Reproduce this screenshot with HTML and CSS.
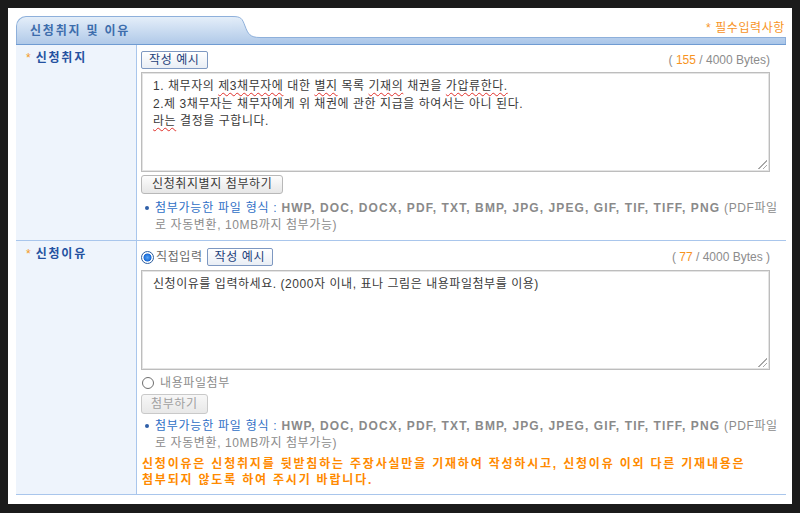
FILE: index.html
```html
<!DOCTYPE html>
<html lang="ko">
<head>
<meta charset="utf-8">
<title>신청취지 및 이유</title>
<link rel="stylesheet" href="styles.css">
</head>
<body>
<div class="frame">
  <div class="sec-head">
    <div class="tab"><span class="tab-title">신청취지 및 이유</span></div>
    <svg class="tab-curve" width="28" height="28" viewBox="0 0 28 28">
      <defs>
        <linearGradient id="hg" x1="0" y1="0" x2="0" y2="1">
          <stop offset="0" stop-color="#e4eef9"/>
          <stop offset="1" stop-color="#b0c9e8"/>
        </linearGradient>
      </defs>
      <path d="M0 0.5 C9 0.5 10 2 13 10 C16 18 18 21.5 28 21.5 L28 28 L0 28 Z" fill="url(#hg)"/>
      <path d="M0 0.5 C9 0.5 10 2 13 10 C16 18 18 21.5 28 21.5" fill="none" stroke="#8eb0db" stroke-width="1"/>
    </svg>
    <div class="head-right">
      <div class="req">* 필수입력사항</div>
      <div class="bar"></div>
    </div>
  </div>

  <div class="row row-purpose">
    <div class="label"><span class="star">*</span>신청취지</div>
    <div class="field">
      <div class="field-top">
        <button class="btn-example" type="button">작성 예시</button>
        <span class="bytes">( <em>155</em> / 4000 Bytes)</span>
      </div>
      <div class="textbox">1. 채무자의 <span class="typo">제3채무자에</span> 대한 <span class="typo">별지</span> 목록 <span class="typo">기재의</span> 채권을 <span class="typo">가압류한다.</span><br>2.제 3채무자는 채무자에게 위 채권에 관한 지급을 하여서는 아니 된다.<br><span class="typo">라는</span> 결정을 구합니다.</div>
      <button class="btn-attach" type="button">신청취지별지 첨부하기</button>
      <div class="note">
        <span class="dot"></span>
        <p class="note-text"><span class="note-key">첨부가능한 파일 형식 :</span> <b class="note-list">HWP, DOC, DOCX, PDF, TXT, BMP, JPG, JPEG, GIF, TIF, TIFF, PNG</b> (PDF파일<br>로 자동변환, 10MB까지 첨부가능)</p>
      </div>
    </div>
  </div>

  <div class="row row-reason">
    <div class="label"><span class="star">*</span>신청이유</div>
    <div class="field">
      <div class="field-top">
        <div class="radio-line">
          <span class="radio radio-on"></span><span class="radio-text">직접입력</span>
          <button class="btn-example" type="button">작성 예시</button>
        </div>
        <span class="bytes">( <em>77</em> / 4000 Bytes )</span>
      </div>
      <div class="textbox">신청이유를 입력하세요. (2000자 이내, 표나 그림은 내용파일첨부를 이용)</div>
      <div class="radio-line radio-line-off">
        <span class="radio radio-off"></span><span class="radio-text-off">내용파일첨부</span>
      </div>
      <button class="btn-disabled" type="button">첨부하기</button>
      <div class="note note-reason">
        <span class="dot"></span>
        <p class="note-text"><span class="note-key">첨부가능한 파일 형식 :</span> <b class="note-list">HWP, DOC, DOCX, PDF, TXT, BMP, JPG, JPEG, GIF, TIF, TIFF, PNG</b> (PDF파일<br>로 자동변환, 10MB까지 첨부가능)</p>
      </div>
      <p class="warn">신청이유은 신청취지를 뒷받침하는 주장사실만을 기재하여 작성하시고, 신청이유 이외 다른 기재내용은 첨부되지 않도록 하여 주시기 바랍니다.</p>
    </div>
  </div>
</div>
</body>
</html>
```

FILE: styles.css
```css
html, body {
  margin: 0;
}
body {
  background: #1b1b1b;
  padding: 8px 8px 0 8px;
  font-family: "Liberation Sans", "Noto Sans CJK KR", sans-serif;
  font-size: 12px;
  letter-spacing: 0.6px;
  color: #3a3a3a;
}
.frame {
  background: #fff;
  height: 496px;
  box-sizing: border-box;
  padding: 8px 6px 0 8px;
}

/* section header */
.sec-head {
  display: flex;
  align-items: flex-end;
  border-bottom: 1px solid #6f9bd2;
}
.tab {
  width: 216px;
  height: 28px;
  box-sizing: border-box;
  border-top: 1px solid #8eb0db;
  border-left: 1px solid #8eb0db;
  border-top-left-radius: 10px;
  background: linear-gradient(#e4eef9, #b0c9e8);
  padding-left: 13px;
  display: flex;
  align-items: center;
}
.tab-title {
  font-weight: bold;
  letter-spacing: 1.8px;
  color: #3d6dac;
  line-height: 16px;
}
.tab-curve {
  display: block;
  flex: none;
}
.head-right {
  flex: 1;
  height: 28px;
  display: flex;
  flex-direction: column;
}
.req {
  flex: 1;
  text-align: right;
  color: #f7931e;
  line-height: 14px;
  padding: 5px 1px 0 0;
}
.bar {
  height: 7px;
  box-sizing: border-box;
  border-top: 1px solid #8eb0db;
  border-right: 1px solid #8eb0db;
  background: linear-gradient(#e4eef9, #a9c5e8) bottom / 100% 28px no-repeat;
}

/* rows */
.row {
  display: grid;
  grid-template-columns: 121px minmax(0, 1fr);
  border-bottom: 1px solid #a9c6ec;
}
.label {
  background: #eef4fc;
  border-right: 1px solid #a9c6ec;
  padding: 5px 0 0 10px;
  font-weight: bold;
  color: #2451a0;
  line-height: 17px;
  letter-spacing: 1.8px;
}
.star {
  color: #f39a1e;
  font-weight: normal;
  margin-right: 5px;
  letter-spacing: 0;
}
.field {
  min-width: 0;
  display: flex;
  flex-direction: column;
  align-items: flex-start;
  padding: 6px 16px 6px 4px;
}
.row-reason .field {
  padding-top: 7px;
}
.field-top {
  align-self: stretch;
  height: 18px;
  display: flex;
  justify-content: space-between;
  align-items: center;
}
.bytes {
  color: #8c8c8c;
  line-height: 16px;
  letter-spacing: 0;
}
.bytes em {
  font-style: normal;
  color: #f7931e;
}

/* buttons */
button {
  font-family: inherit;
  font-size: 12px;
  letter-spacing: 0.6px;
  margin: 0;
  cursor: pointer;
}
.btn-example {
  height: 18px;
  padding: 0 7px;
  border: 1px solid #7e98c1;
  border-radius: 2px;
  background: linear-gradient(#ffffff, #e9eef5);
  color: #1d3f7a;
  line-height: 16px;
}
.btn-attach {
  margin-top: 3px;
  height: 19px;
  padding: 0 10px;
  border: 1px solid #b8b8b8;
  border-radius: 3px;
  background: linear-gradient(#fdfdfd, #e6e6e6);
  color: #3a3a3a;
  line-height: 17px;
}
.btn-disabled {
  margin-top: 3px;
  height: 20px;
  padding: 0 9px;
  border: 1px solid #c9c9c9;
  border-radius: 3px;
  background: linear-gradient(#f7f7f7, #e8e8e8);
  color: #a0a0a0;
  line-height: 18px;
}

/* text boxes */
.textbox {
  position: relative;
  align-self: stretch;
  margin-top: 3px;
  height: 100px;
  box-sizing: border-box;
  border: 1px solid #bdbdbd;
  box-shadow: inset 0 0 0 1px #e4e4e4;
  padding: 5px 10px 0 11px;
  line-height: 17.5px;
  letter-spacing: 0.55px;
  color: #3a3a3a;
}
.row-reason .textbox {
  margin-top: 4px;
}
.textbox::after {
  content: "";
  position: absolute;
  right: 2px;
  bottom: 2px;
  width: 9px;
  height: 9px;
  background: linear-gradient(135deg, transparent 48%, #a8a8a8 48%, #a8a8a8 56%, transparent 56%, transparent 74%, #a8a8a8 74%, #a8a8a8 82%, transparent 82%);
}
.typo {
  text-decoration: underline wavy #e0302a;
  text-decoration-thickness: 1px;
  text-underline-offset: 2px;
}

/* radios */
.radio-line {
  display: flex;
  align-items: center;
}
.radio {
  display: block;
  border-radius: 50%;
  box-sizing: border-box;
  flex: none;
}
.radio-on {
  width: 13px;
  height: 13px;
  border: 1px solid #2d5e9f;
  background: radial-gradient(circle, #58a6f7 0, #1a6ad6 3.6px, #ffffff 4.4px);
}
.radio-text {
  margin: 0 4px 0 2px;
  color: #6a6a6a;
  line-height: 16px;
}
.radio-line-off {
  margin-top: 5px;
  height: 16px;
  padding-left: 1px;
}
.radio-off {
  width: 12px;
  height: 12px;
  border: 1px solid #6e6e6e;
  background: #fff;
}
.radio-text-off {
  margin-left: 6px;
  color: #8c8c8c;
  line-height: 16px;
}

/* notes */
.note {
  display: flex;
  align-items: flex-start;
  margin-top: 6px;
  padding-left: 4px;
}
.note-reason {
  margin-top: 4px;
}
.dot {
  flex: none;
  width: 4px;
  height: 4px;
  border-radius: 50%;
  background: #2f5fa8;
  margin: 6px 6px 0 0;
}
.note-text {
  margin: 0;
  line-height: 17px;
  color: #8c8c8c;
  white-space: nowrap;
}
.note-key {
  color: #2f6fc6;
  letter-spacing: 0.75px;
}
.note-list {
  color: #8a8a8a;
  letter-spacing: 1.1px;
}

.warn {
  margin: 4px 0 0 1px;
  color: #ff8a00;
  font-weight: bold;
  letter-spacing: 1.8px;
  line-height: 16px;
  word-break: keep-all;
}
```
